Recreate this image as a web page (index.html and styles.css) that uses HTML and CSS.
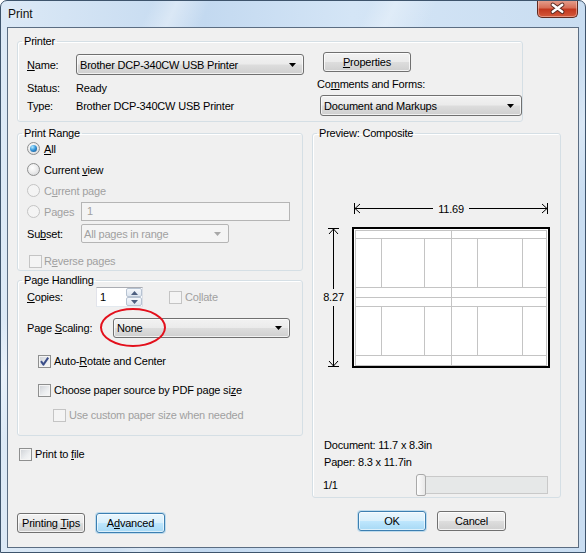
FILE: index.html
```html
<!DOCTYPE html>
<html>
<head>
<meta charset="utf-8">
<title>Print</title>
<link rel="stylesheet" href="styles.css">
</head>
<body>
<div class="window">
  <div class="titlebar">
    <span class="title">Print</span>
    <div class="close">
      <svg width="41" height="17" viewBox="0 0 41 17">
        <path d="M15.5 4.5 L25.5 12 M25.5 4.5 L15.5 12" stroke="#5a2a22" stroke-width="4.6" stroke-linecap="round" fill="none"/>
        <path d="M15.5 4.5 L25.5 12 M25.5 4.5 L15.5 12" stroke="#ffffff" stroke-width="2.6" stroke-linecap="round" fill="none"/>
      </svg>
    </div>
  </div>

  <div class="client">
    <fieldset class="group printer">
      <legend>Printer</legend>
      <div class="printer-body">
        <div class="printer-left">
          <div class="name-row">
            <span class="lbl w49"><u>N</u>ame:</span>
            <div class="combo w228"><span class="combo-text">Brother DCP-340CW USB Printer</span><svg class="arrow" width="7" height="4" viewBox="0 0 7 4"><polygon points="0,0 7,0 3.5,4" fill="#000"/></svg></div>
          </div>
          <div class="info-row first"><span class="lbl w49">Status:</span><span>Ready</span></div>
          <div class="info-row"><span class="lbl w49">Type:</span><span>Brother DCP-340CW USB Printer</span></div>
        </div>
        <div class="printer-right">
          <div class="btn props"><span><u>P</u>roperties</span></div>
          <div class="cf-label">Co<u>m</u>ments and Forms:</div>
          <div class="combo cf"><span class="combo-text">Document and Markups</span><svg class="arrow" width="7" height="4" viewBox="0 0 7 4"><polygon points="0,0 7,0 3.5,4" fill="#000"/></svg></div>
        </div>
      </div>
    </fieldset>

    <div class="columns">
      <div class="left-col">
        <fieldset class="group range">
          <legend>Print Range</legend>
          <div class="range-body">
            <div class="row"><span class="radio checked"></span><span class="rl"><u>A</u>ll</span></div>
            <div class="row"><span class="radio"></span><span class="rl">Current <u>v</u>iew</span></div>
            <div class="row dis"><span class="radio disabled"></span><span class="rl">C<u>u</u>rrent page</span></div>
            <div class="row dis">
              <div class="cell54"><span class="radio disabled"></span><span class="rl">Pa<u>g</u>es</span></div>
              <div class="textbox disabled w209">1</div>
            </div>
            <div class="row subset">
              <span class="cell54 plain">Su<u>b</u>set:</span>
              <div class="combo disabled w148"><span class="combo-text">All pages in range</span><svg class="arrow" width="7" height="4" viewBox="0 0 7 4"><polygon points="0,0 7,0 3.5,4" fill="#a8a8a8"/></svg></div>
            </div>
            <div class="row reverse dis"><span class="box disabled"></span><span class="cl">R<u>e</u>verse pages</span></div>
          </div>
        </fieldset>

        <fieldset class="group handling">
          <legend>Page Handling</legend>
          <div class="handling-body">
            <div class="hrow copies">
              <span class="lbl w69"><u>C</u>opies:</span>
              <div class="spin">
                <span class="spin-val">1</span>
                <div class="spin-btns">
                  <div class="sb"><svg width="7" height="4" viewBox="0 0 7 4"><polygon points="0,4 7,4 3.5,0" fill="#4d5f80"/></svg></div>
                  <div class="sb"><svg width="7" height="4" viewBox="0 0 7 4"><polygon points="0,0 7,0 3.5,4" fill="#4d5f80"/></svg></div>
                </div>
              </div>
              <span class="box disabled collate"></span><span class="cl dis">Co<u>l</u>late</span>
            </div>
            <div class="hrow scaling">
              <span class="lbl w86">Page <u>S</u>caling:</span>
              <div class="combo w177"><span class="combo-text">None</span><svg class="arrow" width="7" height="4" viewBox="0 0 7 4"><polygon points="0,0 7,0 3.5,4" fill="#000"/></svg></div>
              <span class="ring"></span>
            </div>
            <div class="hrow auto">
              <span class="box"><svg width="11" height="11" viewBox="0 0 11 11"><path d="M2 5.2 L4.4 8.6 L9.2 1.6" stroke="#3c4f8a" stroke-width="2" fill="none" stroke-linejoin="round"/></svg></span>
              <span class="cl">Auto-<u>R</u>otate and Center</span>
            </div>
            <div class="hrow choose">
              <span class="box"></span>
              <span class="cl">Choose paper source by PDF page si<u>z</u>e</span>
            </div>
            <div class="hrow custom dis">
              <span class="box disabled"></span>
              <span class="cl">Use custom paper size when needed</span>
            </div>
          </div>
        </fieldset>

        <div class="tofile"><span class="box"></span><span class="cl">Print to <u>f</u>ile</span></div>
      </div>

      <fieldset class="group preview">
        <legend>Preview: Composite</legend>
        <svg class="diagram" width="247" height="290" viewBox="0 0 247 290">
          <g stroke="#000" stroke-width="1" fill="none">
            <path d="M41.5 68.5 H120 M156 68.5 H234.5"/>
            <path d="M41.5 63 V74 M47 64 L42 68.5 L47 73"/>
            <path d="M234.5 63 V74 M229 64 L234 68.5 L229 73"/>
            <path d="M20.5 88.5 V149 M20.5 166 V226.5"/>
            <path d="M15 88.5 H26 M16 94 L20.5 89 L25 94"/>
            <path d="M15 226.5 H26 M16 221 L20.5 226 L25 221"/>
          </g>
          <text x="138" y="72.5" text-anchor="middle" class="dim">11.69</text>
          <text x="20.5" y="161" text-anchor="middle" class="dim">8.27</text>
          <rect x="40" y="88" width="196" height="139" fill="#fff" stroke="#000" stroke-width="2"/>
          <g stroke="#c4c4c4" stroke-width="1" fill="none">
            <rect x="42.5" y="90.5" width="191" height="135"/>
            <path d="M42.5 98.5 H233.5 M42.5 147.5 H233.5 M42.5 157.5 H233.5 M42.5 166.5 H233.5 M42.5 215.5 H233.5"/>
            <path d="M138.5 90.5 V225.5"/>
            <path d="M68.5 98.5 V147.5 M111.5 98.5 V147.5 M164.5 98.5 V147.5 M209.5 98.5 V147.5"/>
            <path d="M68.5 166.5 V215.5 M111.5 166.5 V215.5 M164.5 166.5 V215.5 M209.5 166.5 V215.5"/>
          </g>
        </svg>
        <div class="pv-line first">Document: 11.7 x 8.3in</div>
        <div class="pv-line">Paper: 8.3 x 11.7in</div>
        <div class="slider-row">
          <span class="pagenum">1/1</span>
          <div class="track"><span class="thumb"></span></div>
        </div>
      </fieldset>
    </div>

    <div class="buttons">
      <div class="btn-group left">
        <div class="btn w68"><span>Printing <u>T</u>ips</span></div>
        <div class="btn default w69"><span>A<u>d</u>vanced</span></div>
      </div>
      <div class="btn-group">
        <div class="btn default w68"><span>OK</span></div>
        <div class="btn w69"><span>Cancel</span></div>
      </div>
    </div>
  </div>
</div>
</body>
</html>
```

FILE: styles.css
```css
* { box-sizing: border-box; }
html, body { margin: 0; padding: 0; background: #ffffff; }
body {
  font-family: "Liberation Sans", Arial, sans-serif;
  font-size: 11px;
  letter-spacing: -0.2px;
  color: #000;
}
u { text-decoration: underline; text-underline-offset: 1px; }

.window {
  width: 586px;
  height: 553px;
  border: 1px solid #3e546c;
  border-radius: 7px 7px 0 0;
  overflow: hidden;
  display: flex;
  flex-direction: column;
  background:
    linear-gradient(115deg, rgba(255,255,255,0) 0%, rgba(255,255,255,0) 18%, rgba(255,255,255,0.35) 21%, rgba(255,255,255,0) 25%, rgba(255,255,255,0) 44%, rgba(255,255,255,0.3) 47%, rgba(255,255,255,0) 52%, rgba(255,255,255,0) 72%, rgba(255,255,255,0.3) 76%, rgba(255,255,255,0) 80%),
    linear-gradient(90deg, #dce9f6 0%, #c3d9f0 35%, #d4e5f6 60%, #c9ddf1 100%);
}

.titlebar {
  height: 26px;
  display: flex;
  justify-content: space-between;
  align-items: flex-start;
  flex: none;
}
.title {
  padding-left: 7px;
  line-height: 26px;
  font-size: 12px;
  letter-spacing: 0;
  color: #101010;
  text-shadow: 0 0 6px rgba(255,255,255,0.9);
}
.close {
  width: 41px;
  height: 18px;
  margin-top: -1px;
  margin-right: 7px;
  border: 1px solid #5f2a20;
  border-top: none;
  border-radius: 0 0 5px 5px;
  background: linear-gradient(to bottom, #e6a291 0%, #d86f58 45%, #c3381f 55%, #d45a3c 100%);
  box-shadow: inset 0 0 0 1px rgba(255,220,210,0.45);
  display: flex;
}
.close svg { display: block; }

.client {
  flex: 1;
  margin: 0 6px 4px 6px;
  border: 1px solid #5b6d82;
  background: #f0f0f0;
  padding: 7px 0 0 9px;
}

/* group boxes */
.group {
  margin: 0;
  padding: 0;
  border: 1px solid #d5dfe5;
  border-radius: 3px;
  min-width: 0;
  box-shadow: inset 1px 1px 0 #fff;
}
.group legend {
  padding: 0 2px;
  margin-left: 4px;
  line-height: 13px;
}

.lbl { display: inline-block; flex: none; }
.w49 { width: 49px; }
.w69 { width: 69px; }
.w86 { width: 86px; }

/* combos */
.combo {
  position: relative;
  height: 21px;
  border: 1px solid #707070;
  border-radius: 3px;
  background: linear-gradient(to bottom, #f2f2f2 0%, #ebebeb 48%, #dddddd 52%, #cfcfcf 100%);
  box-shadow: inset 0 0 0 1px rgba(255,255,255,0.7);
  display: flex;
  align-items: center;
  padding-left: 3px;
  flex: none;
}
.combo-text { flex: 1; white-space: nowrap; }
.combo .arrow { margin-right: 7px; flex: none; }
.combo.disabled {
  border-color: #b5b5b5;
  border-radius: 2px;
  background: #f4f4f4;
  box-shadow: none;
  color: #a0a0a0;
  padding-left: 2px;
}
.w228 { width: 228px; }
.w148 { width: 148px; height: 19px; }
.w177 { width: 177px; height: 20px; }

/* buttons */
.btn {
  height: 20px;
  border: 1px solid #707070;
  border-radius: 3px;
  background: linear-gradient(to bottom, #f2f2f2 0%, #ebebeb 48%, #dddddd 52%, #cfcfcf 100%);
  box-shadow: inset 0 0 0 1px rgba(255,255,255,0.75);
  display: flex;
  align-items: center;
  justify-content: center;
  white-space: nowrap;
  flex: none;
}
.btn.default {
  border-color: #3c7fb1;
  background: linear-gradient(to bottom, #eaf6fd 0%, #d9f0fc 48%, #bee6fd 52%, #a7d9f5 100%);
  box-shadow: inset 0 0 0 1px rgba(255,255,255,0.6), 0 0 0 1px rgba(100,180,230,0.35);
}
.w68 { width: 68px; }
.w69.btn { width: 69px; }

/* printer group */
.printer { width: 506px; }
.printer-body {
  display: flex;
  align-items: flex-start;
  padding: 0 0 5px 9px;
}
.printer-left { width: 277px; margin-top: 6px; }
.name-row { display: flex; align-items: center; height: 21px; }
.info-row { display: flex; align-items: center; height: 18px; }
.info-row.first { margin-top: 4px; }
.printer-right { margin-left: 13px; margin-top: 4px; }
.btn.props { width: 88px; margin-left: 6px; }
.cf-label { margin-top: 6px; line-height: 13px; }
.combo.cf { width: 202px; margin-left: 3px; margin-top: 4px; }

/* columns */
.columns {
  display: grid;
  grid-template-columns: 286px 249px;
  column-gap: 9px;
  margin-top: 5px;
}
.left-col { display: flex; flex-direction: column; }

/* radios and checkboxes */
.radio {
  position: relative;
  width: 13px;
  height: 13px;
  border-radius: 50%;
  border: 1px solid #8e8f8f;
  background: radial-gradient(circle at 40% 35%, #ffffff 0%, #f0f0f0 40%, #cfd1d4 100%);
  flex: none;
}
.radio.checked::after {
  content: "";
  position: absolute;
  left: 2px; top: 2px;
  width: 7px; height: 7px;
  border-radius: 50%;
  background: radial-gradient(circle at 35% 30%, #b7ecff 0%, #3a99dc 45%, #0d4b83 100%);
}
.radio.disabled {
  border-color: #c4c4c4;
  background: #f4f4f4;
}
.box {
  width: 13px;
  height: 13px;
  border: 1px solid #8e8f8f;
  background: linear-gradient(135deg, #cdd0d5 0%, #eceef0 60%, #f8f8f8 100%);
  box-shadow: inset 0 0 0 1px #f4f4f4;
  flex: none;
  display: flex;
  align-items: center;
  justify-content: center;
}
.box svg { display: block; }
.box.disabled {
  border-color: #c4c4c4;
  background: #f4f4f4;
  box-shadow: none;
}
.rl { margin-left: 4px; white-space: nowrap; }
.cl { margin-left: 3px; white-space: nowrap; }
.dis, .dis .rl, .dis .cl { color: #a0a0a0; }

/* print range */
.range-body { margin-top: -2px; padding-left: 9px; }
.range-body .row { display: flex; align-items: center; height: 21px; }
.cell54 { width: 54px; display: flex; align-items: center; flex: none; }
.cell54.plain { display: block; }
.range-body .row.subset { margin-top: 1px; }
.range-body .row.reverse { margin-top: 8px; height: 18px; padding-left: 2px; }
.range-body .row.reverse .cl { margin-left: 2px; }
.textbox {
  height: 19px;
  border: 1px solid #b5b5b5;
  background: #f4f4f4;
  padding-left: 5px;
  line-height: 17px;
}
.textbox.disabled { color: #a0a0a0; }
.w209 { width: 209px; }

/* page handling */
.handling { margin-top: 3px; }
.handling-body { padding: 0 0 10px 9px; }
.hrow { display: flex; align-items: center; height: 20px; }
.hrow.scaling { margin-top: 11px; position: relative; }
.hrow.auto { margin-top: 13px; padding-left: 11px; }
.hrow.choose { margin-top: 9px; padding-left: 11px; }
.hrow.custom { margin-top: 5px; padding-left: 26px; }
.spin {
  width: 47px;
  height: 20px;
  border: 1px solid #abadb3;
  border-bottom-color: #e3e9ef;
  border-left-color: #e2e3ea;
  border-right-color: #dbdfe6;
  background: #fff;
  display: flex;
  flex: none;
}
.spin-val { flex: 1; padding-left: 3px; line-height: 18px; }
.spin-btns { width: 16px; display: flex; flex-direction: column; }
.sb {
  flex: 1;
  border: 1px solid #b7c3d2;
  border-radius: 2px;
  background: linear-gradient(to bottom, #f5f8fc, #dde5ef);
  display: flex;
  align-items: center;
  justify-content: center;
}
.sb svg { display: block; }
.box.collate { margin-left: 26px; }
.ring {
  position: absolute;
  left: 73px;
  top: -10px;
  width: 66px;
  height: 39px;
  border: 2px solid #e3101c;
  border-radius: 50%;
  pointer-events: none;
}

.tofile {
  margin-top: 8px;
  height: 20px;
  display: flex;
  align-items: center;
  padding-left: 2px;
}

/* preview */
.preview { display: block; }
.diagram { display: block; }
.dim { font-family: "Liberation Sans", Arial, sans-serif; font-size: 11px; }
.pv-line { padding-left: 11px; line-height: 13px; margin-top: 4px; }
.pv-line.first { margin-top: 9px; }
.slider-row {
  margin-top: 5px;
  height: 22px;
  display: flex;
  align-items: center;
  padding-left: 10px;
  margin-bottom: 1px;
}
.pagenum { width: 93px; flex: none; }
.track {
  position: relative;
  width: 132px;
  height: 18px;
  border: 1px solid #c9c9c9;
  background: #e6e8e8;
}
.thumb {
  position: absolute;
  left: -1px;
  top: -3px;
  width: 10px;
  height: 22px;
  border: 1px solid #a9a9a9;
  border-radius: 3px 3px 2px 2px;
  background: linear-gradient(to right, #fdfdfd, #e8e8e8);
}

/* bottom buttons */
.buttons {
  margin-top: 13px;
  display: flex;
  justify-content: space-between;
  align-items: flex-start;
  padding-right: 72px;
}
.btn-group { display: flex; gap: 11px; }
.btn-group.left { margin-top: 2px; }
```
